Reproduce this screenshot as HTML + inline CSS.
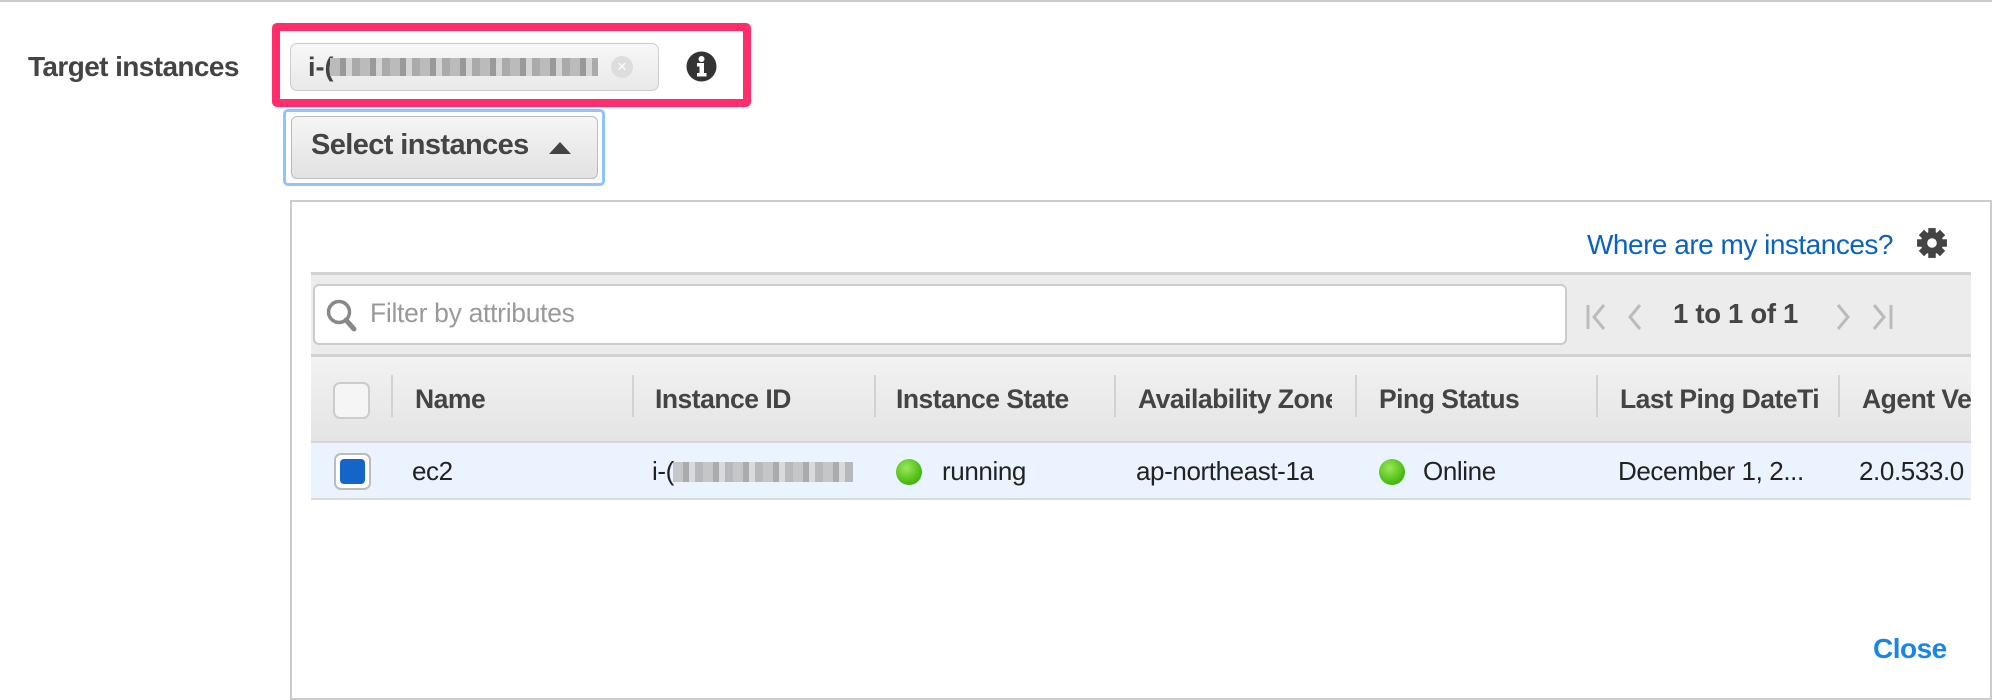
<!DOCTYPE html>
<html><head><meta charset="utf-8"><style>
*{box-sizing:border-box;margin:0;padding:0}
body{width:1992px;height:688px;background:#fff;position:relative;overflow:hidden;font-family:"Liberation Sans",Arial,sans-serif;color:#333}
.a{position:absolute}
.topline{left:0;top:0;width:1992px;height:2px;background:#ccc}
.lbl{left:28px;top:51px;font-size:28px;font-weight:bold;color:#444;letter-spacing:-0.6px}
.pink{left:272px;top:23px;width:479px;height:84px;border:8px solid #ff2d6b;border-radius:5px}
.chip{left:290px;top:43px;width:369px;height:48px;border:1px solid #ccc;border-radius:7px;background:linear-gradient(#f7f7f7,#e9e9e9)}
.chiptxt{left:308px;top:52px;font-size:27px;color:#444;font-weight:bold}
.blur{top:58px;height:18px;background:repeating-linear-gradient(90deg,#bbb 0 10px,#999 10px 16px,#d4d4d4 16px 22px,#aaa 22px 30px)}
.x{left:611px;top:56px;width:22px;height:22px;border-radius:50%;background:#ddd;color:#fff;font-size:17px;line-height:22px;text-align:center}
.glow{left:283px;top:109px;width:322px;height:77px;border:3px solid #8fc3ff;border-radius:5px}
.btn{left:291px;top:116px;width:307px;height:63px;border:1px solid #bbb;border-radius:6px;background:linear-gradient(#f5f5f5,#e2e2e2)}
.btntxt{left:311px;top:129px;font-size:29px;font-weight:bold;color:#444;letter-spacing:-0.6px}
.tri{left:549px;top:142px;width:0;height:0;border-left:11px solid transparent;border-right:11px solid transparent;border-bottom:12px solid #444}
.panel{left:290px;top:200px;width:1702px;height:500px;border:2px solid #ccc}
.where{left:1587px;top:229px;font-size:28px;color:#0a63c4;letter-spacing:-0.5px}
.tool{left:311px;top:272px;width:1660px;height:85px;background:#ececec;border-top:3px solid #d2d2d2;border-bottom:3px solid #d2d2d2}
.filter{left:313px;top:284px;width:1254px;height:61px;background:#fff;border:2px solid #ccc;border-radius:6px}
.ftxt{left:370px;top:298px;font-size:26.5px;color:#999;letter-spacing:-0.3px}
.pgt{left:1673px;top:298px;font-size:27.5px;font-weight:bold;color:#444;letter-spacing:-0.3px}
.head{left:311px;top:357px;width:1660px;height:86px;background:linear-gradient(#f2f2f2,#e4e4e4);border-bottom:2px solid #d6d6d6}
.sep{top:375px;width:2px;height:42px;background:#d2d2d2}
.ht{top:384px;font-size:26.5px;font-weight:bold;color:#444;white-space:nowrap;letter-spacing:-0.5px}
.cb{left:333px;top:382px;width:37px;height:37px;border:2px solid #ccc;border-radius:7px;background:#f5f5f5}
.row{left:311px;top:443px;width:1660px;height:57px;background:#eaf3fe;border-bottom:2px solid #dcdcdc}
.cb2{left:334px;top:453px;width:37px;height:37px;border:2px solid #bbb;border-radius:7px;background:#fff}
.cb2 i{position:absolute;left:4px;top:4px;width:25px;height:25px;border-radius:4px;background:#1565c8}
.dt{top:456px;font-size:26px;color:#222;white-space:nowrap;letter-spacing:-0.4px}
.dot{top:459px;width:26px;height:26px;border-radius:50%;background:radial-gradient(circle at 40% 35%,#9be85a,#4fbf16 60%,#2f9a08)}
.close{left:1873px;top:633px;font-size:28px;font-weight:bold;color:#1a85e6;letter-spacing:-0.5px}
</style></head><body>
<div class="a topline"></div>
<div class="a lbl">Target instances</div>
<div class="a pink"></div>
<div class="a chip"></div>
<div class="a chiptxt">i-(</div>
<div class="a blur" style="left:330px;width:268px"></div>
<div class="a x">×</div>
<svg class="a" style="left:686px;top:51px" width="31" height="31" viewBox="0 0 31 31"><circle cx="15.5" cy="15.5" r="15" fill="#333"/><circle cx="15.5" cy="8" r="3" fill="#fff"/><path d="M11 12h7v10h2.5v3.5h-9.5v-3.5h2.5v-6.5h-2.5z" fill="#fff"/></svg>
<div class="a glow"></div>
<div class="a btn"></div>
<div class="a btntxt">Select instances</div>
<div class="a tri"></div>
<div class="a panel"></div>
<div class="a where">Where are my instances?</div>
<svg class="a" style="left:1916px;top:227px" width="32" height="32" viewBox="0 0 30 30"><g fill="#444" transform="translate(15 15)"><rect x="-3.5" y="-14" width="7" height="28"/><rect x="-3.5" y="-14" width="7" height="28" transform="rotate(45)"/><rect x="-3.5" y="-14" width="7" height="28" transform="rotate(90)"/><rect x="-3.5" y="-14" width="7" height="28" transform="rotate(135)"/><circle r="10.5"/></g><circle cx="15" cy="15" r="4.5" fill="#fff"/></svg>
<div class="a tool"></div>
<div class="a filter"></div>
<svg class="a" style="left:325px;top:298px" width="34" height="36" viewBox="0 0 34 36"><circle cx="14" cy="14" r="10.5" fill="none" stroke="#888" stroke-width="3.5"/><path d="M21 22l8 9" stroke="#888" stroke-width="5" stroke-linecap="round"/></svg>
<div class="a ftxt">Filter by attributes</div>
<svg class="a" style="left:1576px;top:300px" width="330" height="34" viewBox="0 0 330 34" fill="none" stroke="#bbb" stroke-width="3"><path d="M12 5v24M28 5L18 17l10 12M64 5L54 17l10 12M262 5l10 12-10 12M298 5l10 12-10 12M315 5v24"/></svg>
<div class="a pgt">1 to 1 of 1</div>
<div class="a head"></div>
<div class="a cb"></div>
<div class="a sep" style="left:391px"></div>
<div class="a sep" style="left:632px"></div>
<div class="a sep" style="left:874px"></div>
<div class="a sep" style="left:1114px"></div>
<div class="a sep" style="left:1355px"></div>
<div class="a sep" style="left:1596px"></div>
<div class="a sep" style="left:1838px"></div>
<div class="a ht" style="left:415px">Name</div>
<div class="a ht" style="left:655px">Instance ID</div>
<div class="a ht" style="left:896px">Instance State</div>
<div class="a ht" style="left:1138px;width:194px;overflow:hidden">Availability Zone</div>
<div class="a ht" style="left:1379px">Ping Status</div>
<div class="a ht" style="left:1620px;width:198px;overflow:hidden">Last Ping DateTime</div>
<div class="a ht" style="left:1862px;width:109px;overflow:hidden">Agent Version</div>
<div class="a row"></div>
<div class="a cb2"><i></i></div>
<div class="a dt" style="left:412px">ec2</div>
<div class="a dt" style="left:652px">i-(</div>
<div class="a blur" style="left:673px;top:462px;width:180px;height:20px;opacity:.8"></div>
<div class="a dot" style="left:896px"></div>
<div class="a dt" style="left:942px">running</div>
<div class="a dt" style="left:1136px">ap-northeast-1a</div>
<div class="a dot" style="left:1379px"></div>
<div class="a dt" style="left:1423px">Online</div>
<div class="a dt" style="left:1618px">December 1, 2...</div>
<div class="a dt" style="left:1859px;width:112px;overflow:hidden">2.0.533.0</div>
<div class="a close">Close</div>
</body></html>
